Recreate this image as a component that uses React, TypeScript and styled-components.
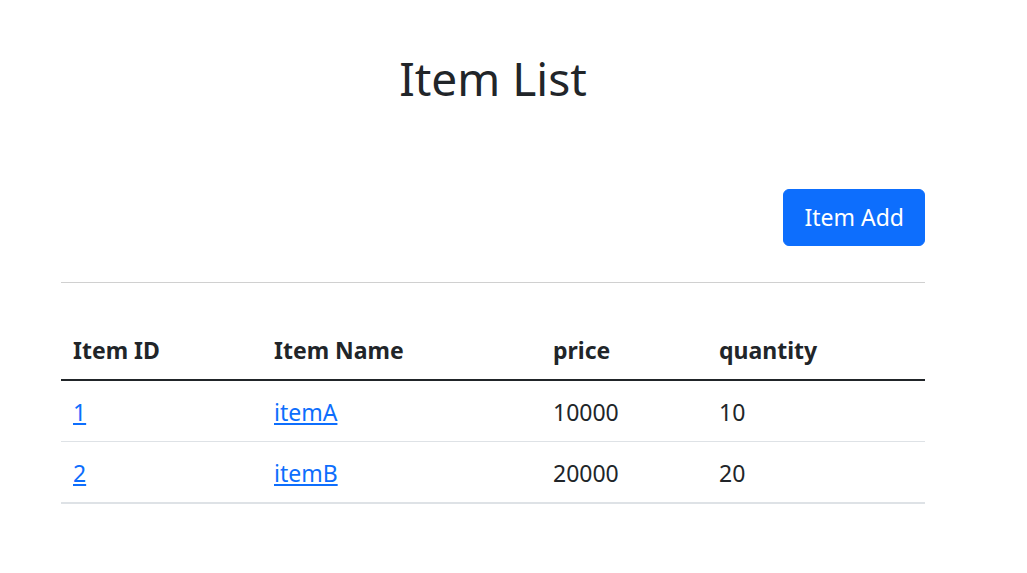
import React from "react";
import styled, { createGlobalStyle } from "styled-components";

interface Item {
  id: number;
  name: string;
  price: number;
  quantity: number;
}

const items: Item[] = [
  { id: 1, name: "itemA", price: 10000, quantity: 10 },
  { id: 2, name: "itemB", price: 20000, quantity: 20 },
];

const GlobalStyle = createGlobalStyle`
  * {
    box-sizing: border-box;
  }

  body {
    margin: 0;
    background: #fff;
    color: #212529;
    font-family: "Noto Sans", "Noto Sans CJK KR", sans-serif;
  }
`;

export default function App() {
  return (
    <>
      <GlobalStyle />
      <Container>
        <Header>
          <Title>Item List</Title>
        </Header>
        <Toolbar>
          <PrimaryButton type="button">Item Add</PrimaryButton>
        </Toolbar>
        <Divider />
        <Table>
          <colgroup>
            <col style={{ width: 201 }} />
            <col style={{ width: 279 }} />
            <col style={{ width: 166 }} />
            <col />
          </colgroup>
          <thead>
            <tr>
              <HeadCell>Item ID</HeadCell>
              <HeadCell>Item Name</HeadCell>
              <HeadCell>price</HeadCell>
              <HeadCell>quantity</HeadCell>
            </tr>
          </thead>
          <tbody>
            {items.map((item) => (
              <tr key={item.id}>
                <Cell>
                  <Link href="#">{item.id}</Link>
                </Cell>
                <Cell>
                  <Link href="#">{item.name}</Link>
                </Cell>
                <Cell>{item.price}</Cell>
                <Cell>{item.quantity}</Cell>
              </tr>
            ))}
          </tbody>
        </Table>
      </Container>
    </>
  );
}

const Container = styled.div`
  width: 864px;
  margin-left: 61px;
  padding-top: 48px;
`;

const Header = styled.div`
  display: flex;
  justify-content: center;
`;

const Title = styled.h1`
  margin: 0;
  font-size: 46px;
  font-weight: 400;
  line-height: 60px;
`;

const Toolbar = styled.div`
  display: flex;
  justify-content: flex-end;
  margin-top: 81px;
`;

const PrimaryButton = styled.button`
  height: 57px;
  padding: 0 20px;
  border: 1px solid #0d6efd;
  border-radius: 6px;
  background: #0d6efd;
  color: #fff;
  font-family: inherit;
  font-size: 23px;
  line-height: 1;
  cursor: pointer;
`;

const Divider = styled.hr`
  margin: 36px 0 36px;
  border: 0;
  border-top: 1px solid #d0d0d0;
`;

const Table = styled.table`
  width: 100%;
  border-collapse: collapse;
  table-layout: fixed;
  font-size: 23px;
  line-height: 36px;
`;

const HeadCell = styled.th`
  padding: 13px 12px 11px;
  text-align: left;
  font-weight: 700;
  border-bottom: 2px solid #212529;
`;

const Cell = styled.td`
  padding: 13px 12px 11px;
  border-bottom: 1px solid #dee2e6;
  tr:last-child > & {
    border-bottom: 2px solid #dee2e6;
  }
`;

const Link = styled.a`
  color: #0d6efd;
  text-decoration: underline;
`;
